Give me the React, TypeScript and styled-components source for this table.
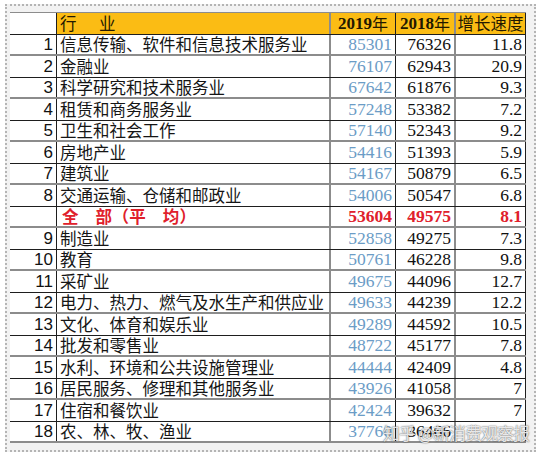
import styled, { createGlobalStyle } from "styled-components";

const GlobalStyle = createGlobalStyle`
  html, body {
    margin: 0;
    padding: 0;
    background: #ffffff;
  }
`;

type Row = {
  no?: number;
  name: string;
  y2019: string;
  y2018: string;
  growth: string;
  total?: boolean;
};

const rows: Row[] = [
  { no: 1, name: "信息传输、软件和信息技术服务业", y2019: "85301", y2018: "76326", growth: "11.8" },
  { no: 2, name: "金融业", y2019: "76107", y2018: "62943", growth: "20.9" },
  { no: 3, name: "科学研究和技术服务业", y2019: "67642", y2018: "61876", growth: "9.3" },
  { no: 4, name: "租赁和商务服务业", y2019: "57248", y2018: "53382", growth: "7.2" },
  { no: 5, name: "卫生和社会工作", y2019: "57140", y2018: "52343", growth: "9.2" },
  { no: 6, name: "房地产业", y2019: "54416", y2018: "51393", growth: "5.9" },
  { no: 7, name: "建筑业", y2019: "54167", y2018: "50879", growth: "6.5" },
  { no: 8, name: "交通运输、仓储和邮政业", y2019: "54006", y2018: "50547", growth: "6.8" },
  { name: "全　部（平　均）", y2019: "53604", y2018: "49575", growth: "8.1", total: true },
  { no: 9, name: "制造业", y2019: "52858", y2018: "49275", growth: "7.3" },
  { no: 10, name: "教育", y2019: "50761", y2018: "46228", growth: "9.8" },
  { no: 11, name: "采矿业", y2019: "49675", y2018: "44096", growth: "12.7" },
  { no: 12, name: "电力、热力、燃气及水生产和供应业", y2019: "49633", y2018: "44239", growth: "12.2" },
  { no: 13, name: "文化、体育和娱乐业", y2019: "49289", y2018: "44592", growth: "10.5" },
  { no: 14, name: "批发和零售业", y2019: "48722", y2018: "45177", growth: "7.8" },
  { no: 15, name: "水利、环境和公共设施管理业", y2019: "44444", y2018: "42409", growth: "4.8" },
  { no: 16, name: "居民服务、修理和其他服务业", y2019: "43926", y2018: "41058", growth: "7" },
  { no: 17, name: "住宿和餐饮业", y2019: "42424", y2018: "39632", growth: "7" },
  { no: 18, name: "农、林、牧、渔业", y2019: "37760", y2018: "36466", growth: "" },
];

const DARK = "#1e1e1e";
const GRAY = "#8c8c8c";
const ORANGE = "#fbbc14";
const BLUE = "#6b9cc6";
const RED = "#e0202b";

const Frame = styled.div`
  position: relative;
  margin: 4px 0 0 5px;
  width: 531px;
  height: 448px;
  box-sizing: border-box;
  border: 2px dotted #b4b4b4;
  background: #f2f2f2;
  padding: 6px 0 0 3px;
`;

const Sheet = styled.div`
  width: 516px;
  background: #ffffff;
  border-top: 1px solid ${GRAY};
`;

const GridRow = styled.div<{ $line: "dark" | "gray" }>`
  display: grid;
  grid-template-columns: 47px 274px 65px 60px 70px;
  height: 21.5px;
  box-sizing: border-box;
  border-bottom: ${(p) => (p.$line === "dark" ? `1px solid ${DARK}` : `2px solid ${GRAY}`)};
`;

const Cell = styled.div<{ $edge: "dark" | "gray" }>`
  display: flex;
  align-items: center;
  white-space: nowrap;
  line-height: 19px;
  box-sizing: border-box;
  border-right: ${(p) => (p.$edge === "dark" ? `1px solid ${DARK}` : `2px solid ${GRAY}`)};
`;

const HeadCell = styled(Cell)<{ $blank?: boolean; $center?: boolean }>`
  background: ${(p) => (p.$blank ? "#ffffff" : ORANGE)};
  color: #231800;
  justify-content: ${(p) => (p.$center ? "center" : "flex-start")};
  padding-left: ${(p) => (p.$center ? "0" : "3px")};
  font-family: "Noto Sans CJK SC", sans-serif;
  font-size: 16.5px;
`;

const Title = styled.span`
  letter-spacing: 3px;
`;

const Year = styled.span`
  font-family: "Liberation Serif", serif;
  font-weight: 700;
  font-size: 17px;
`;

const YearSuffix = styled.span`
  font-family: "Noto Sans CJK SC", sans-serif;
  font-size: 16px;
`;

const IndexCell = styled(Cell)`
  justify-content: flex-end;
  padding-right: 3px;
  font-family: "Liberation Sans", Arial, sans-serif;
  font-size: 17px;
  color: #111111;
`;

const NameCell = styled(Cell)<{ $total?: boolean }>`
  padding-left: ${(p) => (p.$total ? "5px" : "3px")};
  font-family: "Noto Sans CJK SC", sans-serif;
  font-size: 16.5px;
  color: ${(p) => (p.$total ? RED : "#151515")};
  font-weight: ${(p) => (p.$total ? 700 : 400)};
  letter-spacing: ${(p) => (p.$total ? "0.3px" : "0")};
`;

const NumCell = styled(Cell)<{ $tone: "blue" | "black" | "red" }>`
  justify-content: flex-end;
  padding-right: 3px;
  font-family: "Liberation Serif", serif;
  font-size: 17.5px;
  font-weight: ${(p) => (p.$tone === "red" ? 700 : 400)};
  color: ${(p) => (p.$tone === "blue" ? BLUE : p.$tone === "red" ? RED : "#111111")};
`;

const Watermark = styled.div`
  position: absolute;
  left: 376px;
  top: 417px;
  line-height: 20px;
  font-family: "Noto Sans CJK SC", sans-serif;
  font-size: 17px;
  color: rgba(255, 255, 255, 0.85);
  text-shadow: 0 0 1px rgba(60, 60, 60, 0.75), 0 0 2px rgba(60, 60, 60, 0.5);
  white-space: nowrap;
  letter-spacing: -1px;
`;

export default function App() {
  return (
    <>
      <GlobalStyle />
      <Frame>
        <Sheet>
          <GridRow $line="dark">
            <HeadCell $edge="dark" $blank />
            <HeadCell $edge="gray">
              <Title>行　业</Title>
            </HeadCell>
            <HeadCell $edge="dark" $center>
              <Year>2019</Year>
              <YearSuffix>年</YearSuffix>
            </HeadCell>
            <HeadCell $edge="gray" $center>
              <Year>2018</Year>
              <YearSuffix>年</YearSuffix>
            </HeadCell>
            <HeadCell $edge="dark" $center>
              增长速度
            </HeadCell>
          </GridRow>
          {rows.map((r, i) => (
            <GridRow key={i} $line={i % 2 === 0 ? "gray" : "dark"}>
              <IndexCell $edge="dark">{r.no ?? ""}</IndexCell>
              <NameCell $edge="gray" $total={r.total}>
                {r.name}
              </NameCell>
              <NumCell $edge="dark" $tone={r.total ? "red" : "blue"}>
                {r.y2019}
              </NumCell>
              <NumCell $edge="gray" $tone={r.total ? "red" : "black"}>
                {r.y2018}
              </NumCell>
              <NumCell $edge="dark" $tone={r.total ? "red" : "black"}>
                {r.growth}
              </NumCell>
            </GridRow>
          ))}
        </Sheet>
        <Watermark>知乎 @新消费观察报</Watermark>
      </Frame>
    </>
  );
}
